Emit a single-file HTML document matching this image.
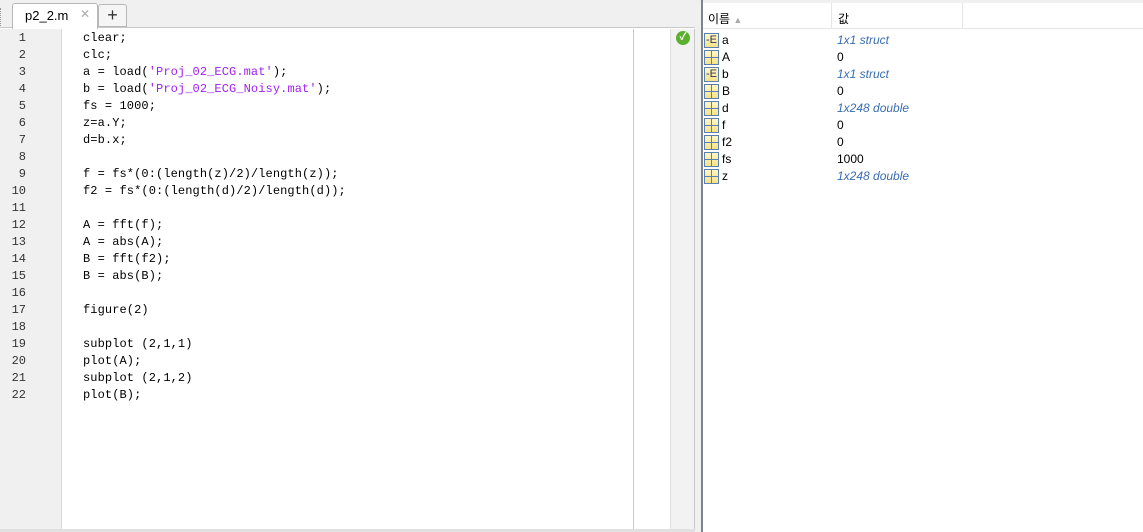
<!DOCTYPE html>
<html><head><meta charset="utf-8"><style>
*{margin:0;padding:0;box-sizing:border-box}
body{width:1143px;height:532px;overflow:hidden;background:#fff;position:relative;font-family:"Liberation Sans","Noto Sans CJK KR",sans-serif}
.abs{position:absolute}
.code{font-family:"Liberation Mono",monospace;font-size:12px;line-height:17px;white-space:pre;color:#000;letter-spacing:0.1px}
.s{color:#a020f0}
.ln{font-family:"Liberation Mono",monospace;font-size:12px;line-height:17px;color:#333;text-align:right;white-space:pre}
.row{position:absolute;left:703px;height:17px;font-size:12px;line-height:17px;width:440px}
.ic{position:absolute;left:1px;top:1px;width:15px;height:15px;border:1px solid #5a7fb0;background:linear-gradient(#fff7c8,#f4e38a)}
.ic.g:before{content:"";position:absolute;left:6px;top:0;width:1px;height:13px;background:#5a7fb0}
.ic.g:after{content:"";position:absolute;left:0;top:6px;width:13px;height:1px;background:#5a7fb0}
.ic.st{font-size:11px;line-height:12px;color:#335;text-align:right;padding-right:1px}
.nm{position:absolute;left:19px}
.vl{position:absolute;left:134px}
.it{color:#3a6db0;font-style:italic}
</style></head><body>
<div class="abs" style="left:0;top:0;width:695px;height:28px;background:#f0f0f0;border-bottom:1px solid #c8c8c8"></div>
<div class="abs" style="left:0;top:8px;width:4px;height:18px;border-left:1px dotted #999"></div>
<div class="abs" style="left:12px;top:3px;width:86px;height:26px;background:#fff;border:1px solid #b8b8b8;border-bottom:none;border-radius:3px 3px 0 0"></div>
<div class="abs" style="left:25px;top:8px;font-size:13px;color:#000">p2_2.m</div>
<div class="abs" style="left:80px;top:7px;font-size:12px;color:#aaa">✕</div>
<div class="abs" style="left:98px;top:4px;width:29px;height:23px;background:#f5f5f5;border:1px solid #b8b8b8;border-radius:3px 3px 0 0;font-size:18px;line-height:20px;text-align:center;color:#333">+</div>
<div class="abs" style="left:0;top:29px;width:62px;height:503px;background:#f0f0f0;border-right:1px solid #d6d6d6"></div>
<div class="abs ln" style="left:0;top:30px;width:26px">1
2
3
4
5
6
7
8
9
10
11
12
13
14
15
16
17
18
19
20
21
22</div>
<div class="abs code" style="left:83px;top:30px">clear;
clc;
a = load(<span class="s">'Proj_02_ECG.mat'</span>);
b = load(<span class="s">'Proj_02_ECG_Noisy.mat'</span>);
fs = 1000;
z=a.Y;
d=b.x;

f = fs*(0:(length(z)/2)/length(z));
f2 = fs*(0:(length(d)/2)/length(d));

A = fft(f);
A = abs(A);
B = fft(f2);
B = abs(B);

figure(2)

subplot (2,1,1)
plot(A);
subplot (2,1,2)
plot(B);</div>
<div class="abs" style="left:633px;top:29px;width:1px;height:500px;background:#c8c8c8"></div>
<div class="abs" style="left:670px;top:29px;width:25px;height:500px;background:#f2f2f2;border-left:1px solid #e0e0e0;border-right:1px solid #c8c8c8"></div>
<div class="abs" style="left:676px;top:31px;width:14px;height:14px;border-radius:50%;background:#5cb030;color:#fff;font-size:10px;line-height:14px;text-align:center;font-weight:bold">✓</div>
<div class="abs" style="left:0;top:529px;width:695px;height:3px;background:#e0e0e0"></div>
<div class="abs" style="left:695px;top:0;width:7px;height:532px;background:#f0f0f0"></div>
<div class="abs" style="left:701px;top:0;width:2px;height:532px;background:#7a8590"></div>
<div class="abs" style="left:703px;top:0;width:440px;height:29px;background:#fff;border-bottom:1px solid #e6e6e6"></div>
<div class="abs" style="left:703px;top:0;width:440px;height:3px;background:#f0f0f0"></div>
<div class="abs" style="left:708px;top:10px;font-size:12px">이름 <span style="color:#aaa;font-size:9px">▲</span></div>
<div class="abs" style="left:831px;top:3px;width:1px;height:26px;background:#e6e6e6"></div>
<div class="abs" style="left:838px;top:10px;font-size:12px">값</div>
<div class="abs" style="left:962px;top:3px;width:1px;height:26px;background:#e6e6e6"></div>
<div class="row" style="top:32px"><div class="ic st">-E</div><span class="nm">a</span><span class="vl it">1x1 struct</span></div>
<div class="row" style="top:49px"><div class="ic g"></div><span class="nm">A</span><span class="vl">0</span></div>
<div class="row" style="top:66px"><div class="ic st">-E</div><span class="nm">b</span><span class="vl it">1x1 struct</span></div>
<div class="row" style="top:83px"><div class="ic g"></div><span class="nm">B</span><span class="vl">0</span></div>
<div class="row" style="top:100px"><div class="ic g"></div><span class="nm">d</span><span class="vl it">1x248 double</span></div>
<div class="row" style="top:117px"><div class="ic g"></div><span class="nm">f</span><span class="vl">0</span></div>
<div class="row" style="top:134px"><div class="ic g"></div><span class="nm">f2</span><span class="vl">0</span></div>
<div class="row" style="top:151px"><div class="ic g"></div><span class="nm">fs</span><span class="vl">1000</span></div>
<div class="row" style="top:168px"><div class="ic g"></div><span class="nm">z</span><span class="vl it">1x248 double</span></div>
</body></html>
